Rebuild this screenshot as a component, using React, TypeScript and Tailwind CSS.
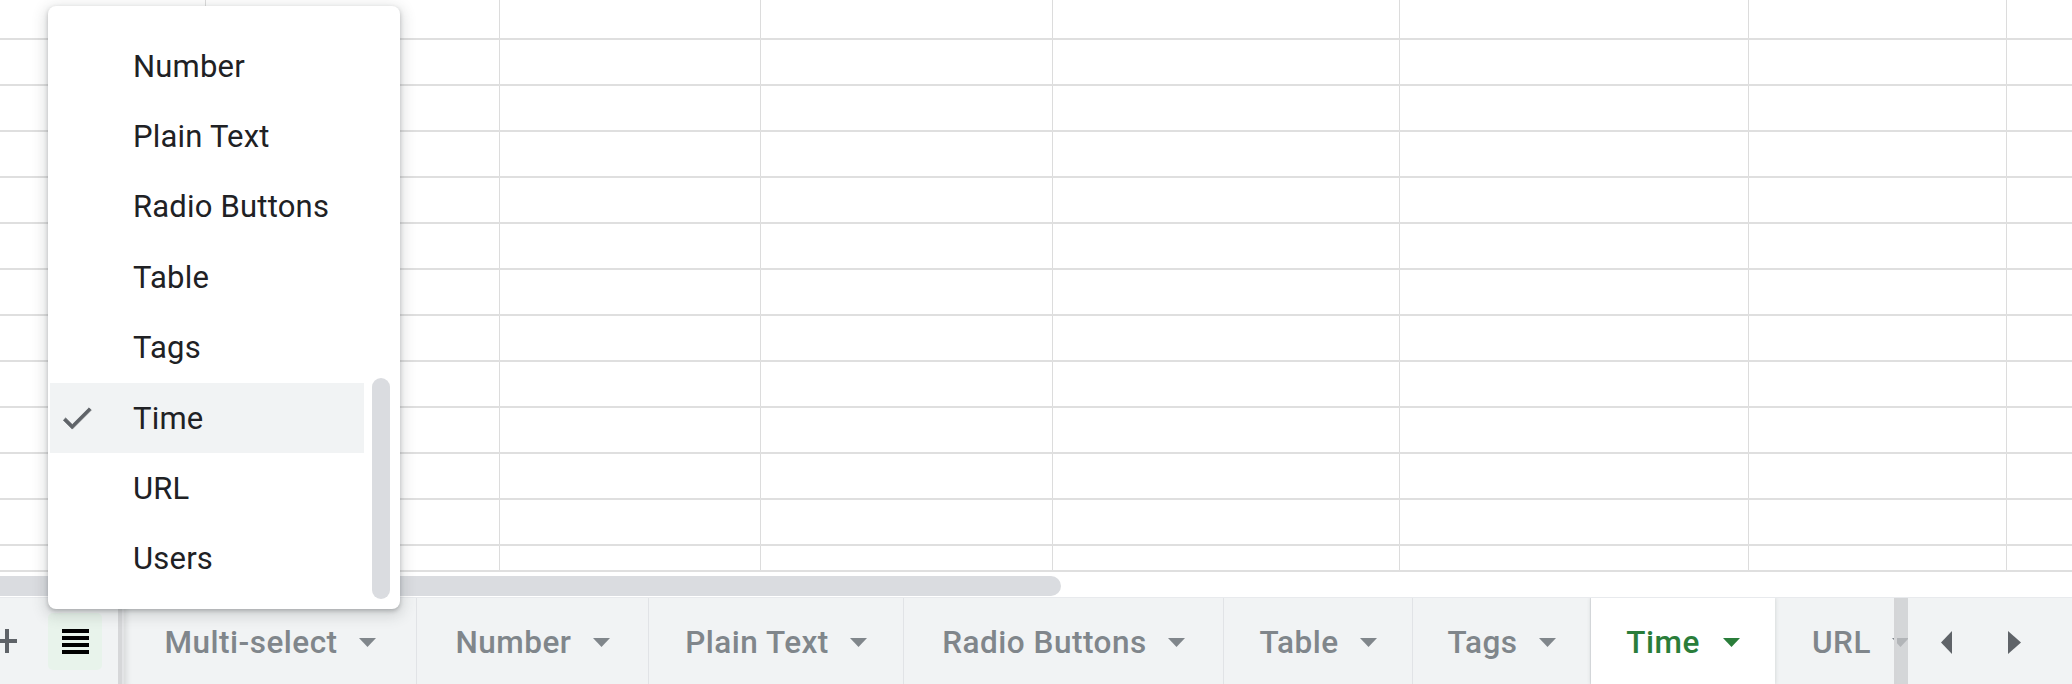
import React from 'react';

const colClasses = [
  'w-[206px]',
  'w-[294px]',
  'w-[261px]',
  'w-[292px]',
  'w-[347px]',
  'w-[349px]',
  'w-[258px]',
];

const rowClasses = [
  'h-[40px]',
  'h-[46px]', 'h-[46px]', 'h-[46px]', 'h-[46px]', 'h-[46px]', 'h-[46px]',
  'h-[46px]', 'h-[46px]', 'h-[46px]', 'h-[46px]', 'h-[46px]',
  'h-[26px]',
];

const menuItems = ['Number', 'Plain Text', 'Radio Buttons', 'Table', 'Tags', 'Time', 'URL', 'Users'];

const tabs = [
  { name: 'Multi-select', w: 'w-[293px] justify-center' },
  { name: 'Number', w: 'w-[232px] justify-center' },
  { name: 'Plain Text', w: 'w-[255px] justify-center' },
  { name: 'Radio Buttons', w: 'w-[320px] justify-center' },
  { name: 'Table', w: 'w-[189px] justify-center' },
  { name: 'Tags', w: 'w-[178px] justify-center' },
  { name: 'Time', w: 'w-[184px] justify-center' },
  { name: 'URL', w: 'w-[184px] justify-start pl-[37px]' },
];

const DropArrow = ({ color }: { color: string }) => (
  <svg width="17" height="9" viewBox="0 0 17 9" className="shrink-0">
    <polygon points="0,0 17,0 8.5,9" fill={color} />
  </svg>
);

export default function App() {
  return (
    <div className="relative w-[2072px] h-[684px] overflow-hidden bg-white font-['Roboto',sans-serif]">
      {/* sheet grid */}
      <div className="flex flex-col">
        {rowClasses.map((rc, r) => (
          <div key={r} className={`flex ${rc} border-b-2 border-[#dfdfdf]`}>
            {colClasses.map((cc, c) => (
              <div key={c} className={`${cc} shrink-0 border-r border-[#dcdcdc]`} />
            ))}
            <div className="flex-1" />
          </div>
        ))}
      </div>

      {/* horizontal scrollbar */}
      <div className="h-[25px] pt-[4px]">
        <div className="w-[1061px] h-[20px] bg-[#dadce0] rounded-r-full" />
      </div>

      {/* sheet tab bar */}
      <div className="flex h-[87px] bg-[#f1f3f4] border-t border-[#e8eaed]">
        <div className="w-[48px] shrink-0 flex items-center">
          <svg width="18" height="28" viewBox="0 0 18 28">
            <rect x="5" y="2" width="4" height="24" fill="#5f6368" />
            <rect x="0" y="12" width="17" height="4" fill="#5f6368" />
          </svg>
        </div>
        <div className="w-[54px] h-[57px] self-center shrink-0 rounded-[5px] bg-[#e8f3eb] flex items-center justify-center">
          <div className="flex flex-col gap-[3px] w-[27px]">
            <div className="h-[4px] bg-black" />
            <div className="h-[4px] bg-black" />
            <div className="h-[4px] bg-black" />
            <div className="h-[4px] bg-black" />
          </div>
        </div>
        <div className="w-[16px] shrink-0" />
        <div className="w-[4px] shrink-0 bg-[#d6d7d9]" />
        <div className="w-[2px] shrink-0 bg-[#e3e4e6]" />
        <div className="relative flex-1 flex overflow-hidden shadow-[inset_8px_0_6px_-6px_rgba(0,0,0,0.12)]">
          {tabs.map((t) => {
            const active = t.name === 'Time';
            return (
              <div
                key={t.name}
                className={
                  active
                    ? `${t.w} flex items-center shrink-0 pt-[3px] gap-[23px] bg-white shadow-[0_0_4px_rgba(60,64,67,0.2)] z-10`
                    : `${t.w} flex items-center shrink-0 pt-[3px] gap-[21px] border-r border-[#e1e3e6]`
                }
              >
                <span className={active ? 'text-[31.5px] tracking-[0.5px] font-medium text-[#2a7d3a] leading-none' : 'text-[31.5px] tracking-[0.5px] font-medium text-[#80868b] leading-none'}>
                  {t.name}
                </span>
                <DropArrow color={active ? '#2a7d3a' : '#80868b'} />
              </div>
            );
          })}
          <div className="absolute right-0 top-0 bottom-0 w-[14px] bg-[rgba(200,201,204,0.7)] border-l-[3px] border-[#d4d5d7] z-20" />
        </div>
        <div className="w-[164px] shrink-0 flex items-center pt-[3px] pl-[33px] gap-[56px]">
          <svg width="11" height="23" viewBox="0 0 11 23">
            <polygon points="11,0 11,23 0,11.5" fill="#5f6368" />
          </svg>
          <svg width="13" height="23" viewBox="0 0 13 23">
            <polygon points="0,0 0,23 13,11.5" fill="#5f6368" />
          </svg>
        </div>
      </div>

      {/* open dropdown menu */}
      <div className="absolute left-[48px] top-[6px] w-[352px] h-[603px] bg-white rounded-[8px] shadow-[0_4px_13px_4px_rgba(60,64,67,0.15),0_2px_4px_0_rgba(60,64,67,0.3)] flex">
        <div className="ml-[2px] w-[314px] pt-[25px] flex flex-col">
          {menuItems.map((m) => {
            const sel = m === 'Time';
            return (
              <div key={m} className={sel ? 'h-[70.4px] shrink-0 flex items-center bg-[#f1f3f4] pl-[8px]' : 'h-[70.4px] shrink-0 flex items-center pl-[8px]'}>
                <div className="w-[75px] shrink-0 flex items-center">
                  {sel && (
                    <svg width="38" height="38" viewBox="0 0 24 24">
                      <path d="M9 16.17L4.83 12l-1.42 1.41L9 19 21 7l-1.41-1.41z" fill="#5f6368" stroke="#5f6368" strokeWidth="0.5" />
                    </svg>
                  )}
                </div>
                <span className="text-[31px] tracking-[0.2px] text-[#202124] leading-none">{m}</span>
              </div>
            );
          })}
        </div>
        <div className="ml-[8px] w-[18px] flex flex-col justify-end pb-[10px]">
          <div className="h-[221px] rounded-full bg-[#dadce0]" />
        </div>
      </div>
    </div>
  );
}
